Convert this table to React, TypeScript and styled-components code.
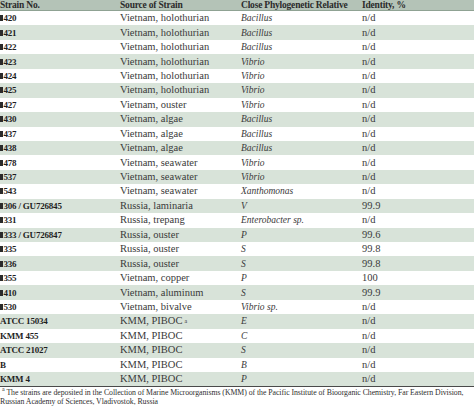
import React from "react";
import styled, { createGlobalStyle } from "styled-components";

const Global = createGlobalStyle`
  html, body { margin: 0; padding: 0; background: #ffffff; overflow: hidden; }
  body { width: 474px; height: 406px; }
`;

const Page = styled.div`
  width: 474px;
  height: 406px;
  overflow: hidden;
  font-family: "Liberation Serif", "DejaVu Serif", serif;
  color: #2a2a2a;
`;

const Table = styled.div`
  display: flex;
  flex-direction: column;
  border-bottom: 1.5px solid #4a4a4a;
`;

const Header = styled.div`
  display: grid;
  grid-template-columns: 120px 121px 121px 1fr;
  height: 11px;
  background: #b4c3b7;
  border-bottom: 1px solid #8fa293;
  align-items: end;
  font-weight: bold;
  font-size: 9.5px;
  letter-spacing: -0.2px;
  line-height: 11px;
  color: #2b2b2b;
  overflow: hidden;
  box-sizing: border-box;
`;

const HeadCell = styled.div`
  white-space: nowrap;
  padding-bottom: 1px;
`;

const Row = styled.div<{ $alt: boolean }>`
  display: grid;
  grid-template-columns: 120px 121px 121px 1fr;
  height: 14.45px;
  align-items: center;
  background: ${(p) => (p.$alt ? "#d8e3d9" : "#ffffff")};
  line-height: 14px;
`;

const Cell = styled.div<{ $kind: "id" | "text" | "taxon" }>`
  white-space: nowrap;
  display: flex;
  align-items: center;
  font-size: ${(p) => (p.$kind === "id" ? "9px" : p.$kind === "taxon" ? "9.5px" : "10.5px")};
  font-weight: ${(p) => (p.$kind === "id" ? "bold" : "normal")};
  font-style: ${(p) => (p.$kind === "taxon" ? "italic" : "normal")};
  letter-spacing: ${(p) => (p.$kind === "id" ? "-0.2px" : "0")};
  color: ${(p) => (p.$kind === "id" ? "#1f1f1f" : "#3a3a3a")};
`;

const Clip = styled.span`
  display: inline-block;
  width: 2.5px;
  height: 6px;
  background: #2a2a2a;
  margin-right: 1px;
`;

const Sup = styled.sup`
  font-size: 6px;
  line-height: 0;
  margin-left: 2px;
  vertical-align: 4px;
`;

const Foot = styled.div`
  font-size: 7.8px;
  line-height: 8.5px;
  color: #2f2f2f;
  white-space: nowrap;
  padding-top: 2px;
  letter-spacing: -0.05px;
`;

type R = [string, boolean, string, string, string];

const rows: R[] = [
  ["420", true, "Vietnam, holothurian", "Bacillus", "n/d"],
  ["421", true, "Vietnam, holothurian", "Bacillus", "n/d"],
  ["422", true, "Vietnam, holothurian", "Bacillus", "n/d"],
  ["423", true, "Vietnam, holothurian", "Vibrio", "n/d"],
  ["424", true, "Vietnam, holothurian", "Vibrio", "n/d"],
  ["425", true, "Vietnam, holothurian", "Vibrio", "n/d"],
  ["427", true, "Vietnam, ouster", "Vibrio", "n/d"],
  ["430", true, "Vietnam, algae", "Bacillus", "n/d"],
  ["437", true, "Vietnam, algae", "Bacillus", "n/d"],
  ["438", true, "Vietnam, algae", "Bacillus", "n/d"],
  ["478", true, "Vietnam, seawater", "Vibrio", "n/d"],
  ["537", true, "Vietnam, seawater", "Vibrio", "n/d"],
  ["543", true, "Vietnam, seawater", "Xanthomonas", "n/d"],
  ["306 / GU726845", true, "Russia, laminaria", "V", "99.9"],
  ["331", true, "Russia, trepang", "Enterobacter sp.", "n/d"],
  ["333 / GU726847", true, "Russia, ouster", "P", "99.6"],
  ["335", true, "Russia, ouster", "S", "99.8"],
  ["336", true, "Russia, ouster", "S", "99.8"],
  ["355", true, "Vietnam, copper", "P", "100"],
  ["410", true, "Vietnam, aluminum", "S", "99.9"],
  ["530", true, "Vietnam, bivalve", "Vibrio sp.", "n/d"],
  ["ATCC 15034", false, "KMM, PIBOC", "E", "n/d"],
  ["KMM 455", false, "KMM, PIBOC", "C", "n/d"],
  ["ATCC 21027", false, "KMM, PIBOC", "S", "n/d"],
  ["B", false, "KMM, PIBOC", "B", "n/d"],
  ["KMM 4", false, "KMM, PIBOC", "P", "n/d"],
];

export default function App() {
  return (
    <>
      <Global />
      <Page>
        <Table>
          <Header>
            <HeadCell>Strain No.</HeadCell>
            <HeadCell>Source of Strain</HeadCell>
            <HeadCell>Close Phylogenetic Relative</HeadCell>
            <HeadCell>Identity, %</HeadCell>
          </Header>
          {rows.map(([id, clip, src, rel, ident], i) => (
            <Row key={i} $alt={i % 2 === 1}>
              <Cell $kind="id">
                {clip && <Clip />}
                {id}
              </Cell>
              <Cell $kind="text">
                {src}
                {i === 21 && <Sup>a</Sup>}
              </Cell>
              <Cell $kind="taxon">{rel}</Cell>
              <Cell $kind="text">{ident}</Cell>
            </Row>
          ))}
        </Table>
        <Foot>
          <Sup>a</Sup> The strains are deposited in the Collection of Marine Microorganisms (KMM) of the
          Pacific Institute of Bioorganic Chemistry, Far Eastern Division,
          <br />
          Russian Academy of Sciences, Vladivostok, Russia
        </Foot>
      </Page>
    </>
  );
}
